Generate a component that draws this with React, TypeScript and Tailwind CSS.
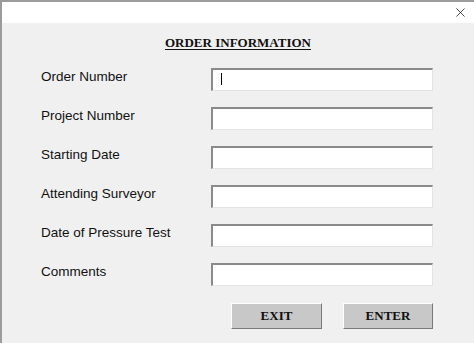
import { X } from "lucide-react";

const fields = [
    "Order Number",
    "Project Number",
    "Starting Date",
    "Attending Surveyor",
    "Date of Pressure Test",
    "Comments",
];

export default function App() {
    return (
        <div className="w-[474px] h-[343px] bg-[#f0f0f0] border-t-2 border-l-2 border-[#9b9b9b] flex flex-col overflow-hidden">
            <div className="h-[21px] bg-white flex items-center justify-end pr-[6px] shrink-0">
                <X className="w-[15px] h-[15px] text-[#222]" strokeWidth={1.3} />
            </div>

            <div className="flex-1 flex flex-col">
                <h1 className="mt-[12px] text-center font-['Liberation_Serif',serif] font-bold text-[13px] underline underline-offset-2 text-[#111] leading-[16px]">
                    ORDER INFORMATION
                </h1>

                <div className="mt-[17px] flex flex-col gap-[16px] pl-[39px]">
                    {fields.map((label, i) => (
                        <div key={label} className="flex items-center h-[23px]">
                            <span className="w-[170px] -mt-[4px] font-['Liberation_Sans',sans-serif] text-[13.5px] text-[#111]">
                                {label}
                            </span>
                            <div className="w-[222px] h-[23px] bg-white border-t-2 border-l-2 border-t-[#8a8a8a] border-l-[#8a8a8a] border-r border-b border-r-[#e3e3e3] border-b-[#e3e3e3] flex items-center">
                                {i === 0 && <div className="ml-[8px] w-px h-[12px] bg-black -mt-[3px]" />}
                            </div>
                        </div>
                    ))}
                </div>

                <div className="mt-[17px] flex gap-[21px] pl-[229px]">
                    <button className="w-[91px] h-[26px] bg-[#c8c8c8] border border-t-white border-l-white border-b-[#7a7a7a] border-r-[#7a7a7a] font-['Liberation_Serif',serif] font-bold text-[13px] text-[#111]">
                        EXIT
                    </button>
                    <button className="w-[90px] h-[26px] bg-[#c8c8c8] border border-t-white border-l-white border-b-[#7a7a7a] border-r-[#7a7a7a] font-['Liberation_Serif',serif] font-bold text-[13px] text-[#111]">
                        ENTER
                    </button>
                </div>
            </div>
        </div>
    );
}
